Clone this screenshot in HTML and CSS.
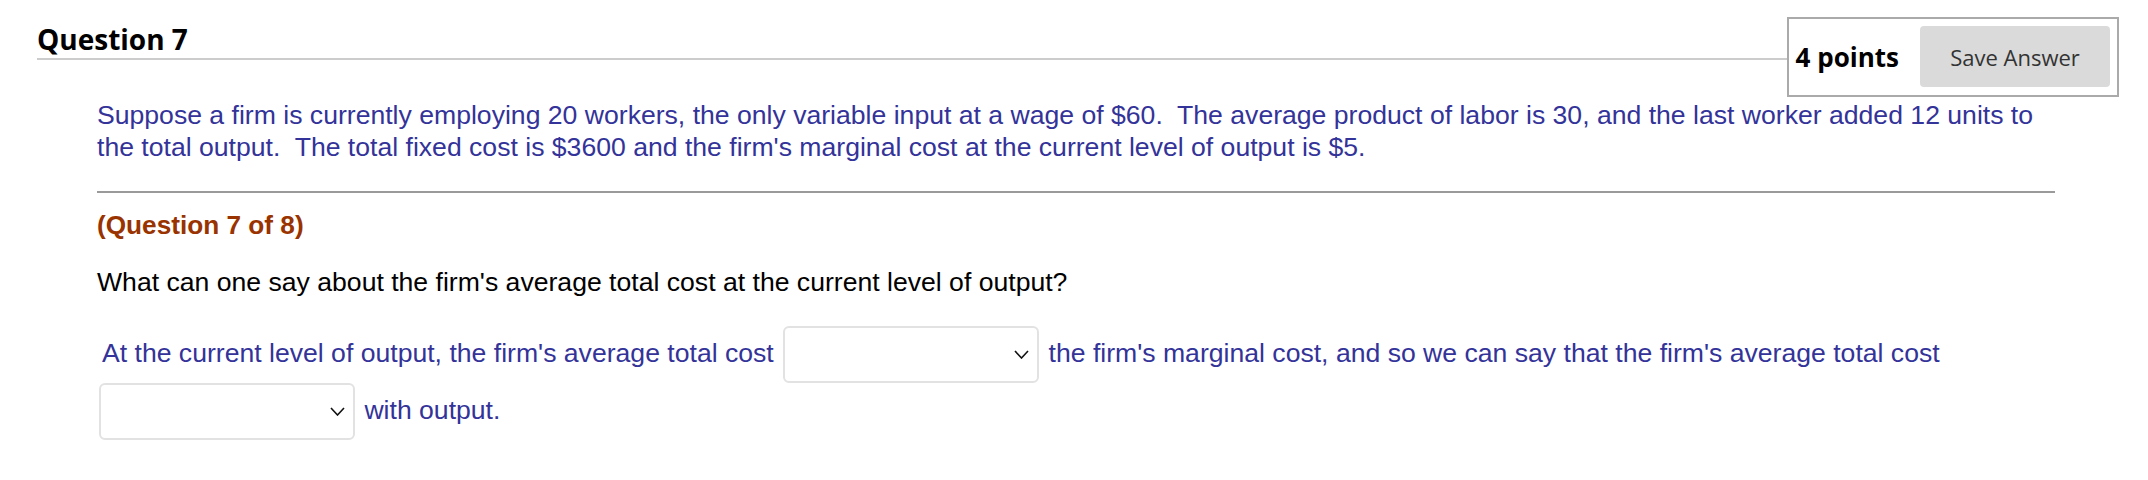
FILE: index.html
```html
<!DOCTYPE html>
<html lang="en">
<head>
<meta charset="utf-8">
<title>Question 7</title>
<link rel="stylesheet" href="styles.css">
</head>
<body>
<div class="header">
  <h2 class="title">Question 7</h2>
  <div class="points-box">
    <span class="points">4 points</span>
    <button class="save-btn" type="button">Save Answer</button>
  </div>
</div>
<div class="content">
  <p class="stem">Suppose a firm is currently employing 20 workers, the only variable input at a wage of $60.&nbsp; The average product of labor is 30, and the last worker added 12 units to the total output.&nbsp; The total fixed cost is $3600 and the firm's marginal cost at the current level of output is $5.</p>
  <hr class="divider">
  <p class="sub-label">(Question 7 of 8)</p>
  <p class="prompt">What can one say about the firm's average total cost at the current level of output?</p>
  <div class="answer"><span class="lead">At the current level of output, the firm's average total cost</span> <span class="dropdown"><svg class="chev" width="15" height="9" viewBox="0 0 15 9"><path d="M1 1 L7.5 8 L14 1" fill="none" stroke="#111" stroke-width="1.6"/></svg></span> the firm's marginal cost, and so we can say that the firm's average total cost <span class="dropdown"><svg class="chev" width="15" height="9" viewBox="0 0 15 9"><path d="M1 1 L7.5 8 L14 1" fill="none" stroke="#111" stroke-width="1.6"/></svg></span> with output.</div>
</div>
</body>
</html>
```

FILE: styles.css
```css
html, body {
  margin: 0;
  padding: 0;
  background: #ffffff;
}

body {
  font-family: "Liberation Sans", Arial, sans-serif;
}

.header {
  display: flex;
  align-items: flex-start;
  padding: 17px 29px 0 37px;
}

.title {
  flex: 1;
  margin: 3px 0 0 0;
  font-family: "Open Sans", sans-serif;
  font-weight: 700;
  font-size: 28px;
  line-height: 38px;
  color: #000;
  border-bottom: 2px solid #cccccc;
}

.points-box {
  display: flex;
  align-items: center;
  gap: 21px;
  border: 2px solid #aaaaaa;
  padding: 7px 7px 8px 7px;
  background: #fff;
}

.points {
  font-family: "Open Sans", sans-serif;
  font-weight: 700;
  font-size: 26px;
  color: #000;
}

.save-btn {
  width: 190px;
  height: 61px;
  border: none;
  border-radius: 4px;
  background: #dadada;
  color: #333333;
  font-family: "Open Sans", sans-serif;
  font-size: 22px;
  padding: 0;
}

.content {
  margin-left: 97px;
  width: 1958px;
}

.stem {
  margin: 2px 0 0 0;
  font-size: 26.6px;
  line-height: 32px;
  color: #333399;
}

.divider {
  margin: 28px 0 0 0;
  border: none;
  border-top: 2px solid #9a9a9a;
  height: 0;
}

.sub-label {
  margin: 16px 0 0 0;
  font-size: 26.2px;
  line-height: 32px;
  font-weight: 700;
  color: #993300;
}

.prompt {
  margin: 25px 0 0 0;
  font-size: 26.6px;
  line-height: 32px;
  color: #000;
}

.answer {
  margin-top: 28px;
  font-size: 26.6px;
  line-height: 32px;
  color: #333399;
}

.lead {
  margin-left: 5px;
}

.dropdown {
  display: inline-flex;
  align-items: center;
  justify-content: flex-end;
  box-sizing: border-box;
  width: 256px;
  height: 57px;
  margin: 0 2px;
  padding-right: 8px;
  border: 2px solid #e2e2e2;
  border-radius: 6px;
  background: #fff;
  vertical-align: middle;
}

.chev {
  display: block;
}
```
